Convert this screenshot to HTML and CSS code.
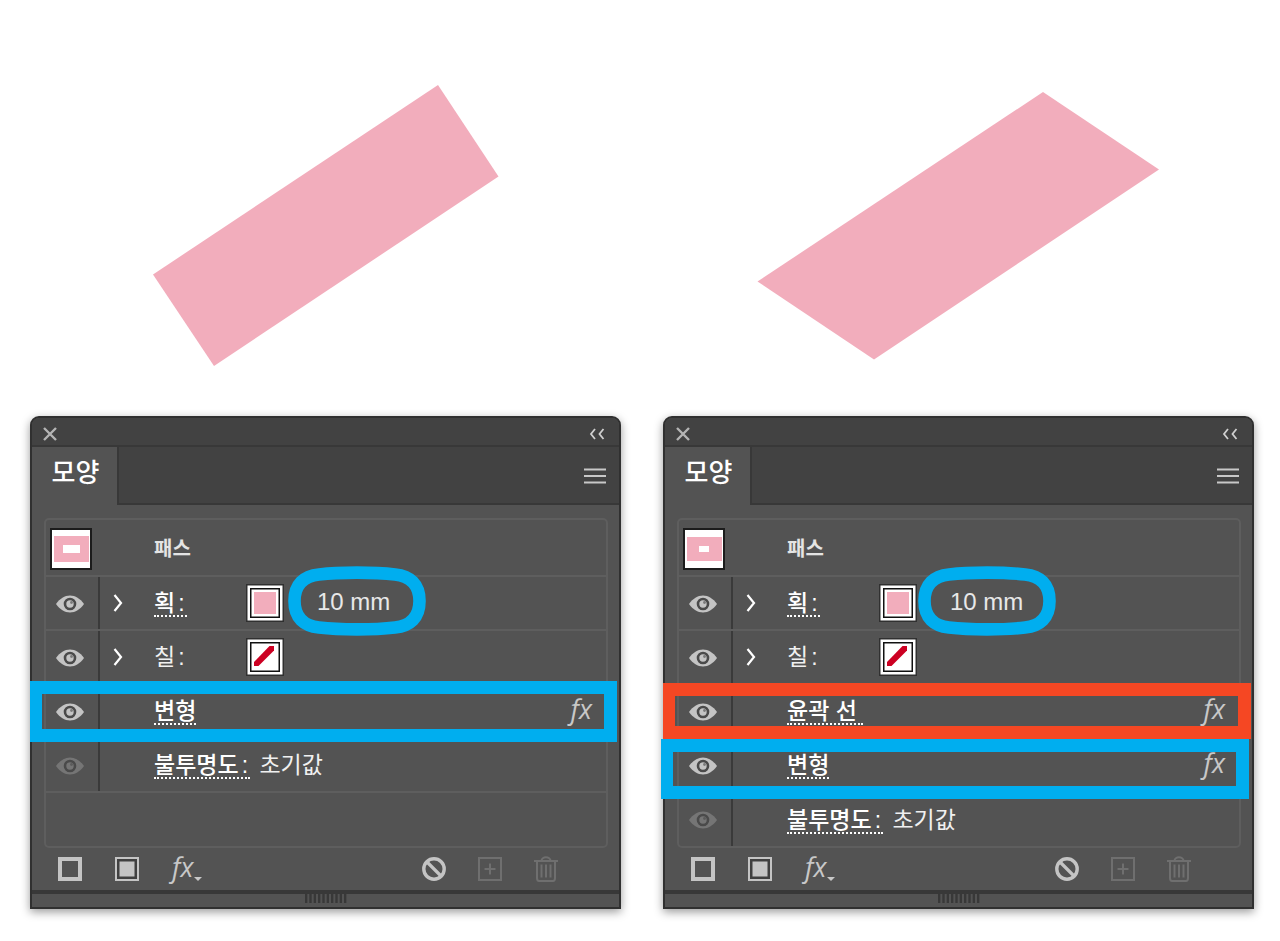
FILE: index.html
```html
<!DOCTYPE html>
<html lang="ko">
<head>
	<meta charset="UTF-8">
	<meta name="viewport" content="width=device-width, initial-scale=1">
	<title>모양 패널</title>
	<link rel="stylesheet" href="styles.css">
</head>
<body>
<!-- icons -->
<svg class="sprite" aria-hidden="true">
	<symbol id="eye" viewBox="0 0 28 18">
		<path d="M0 9C4 3.500 8.500.500 14 .500S24 3.500 28 9C24 14.500 19.500 17.500 14 17.500S4 14.500 0 9z" fill="currentColor"/>
		<circle cx="14" cy="9" r="5" fill="none" stroke="#4a4a4a" stroke-width="2.600"/>
		<circle cx="15.500" cy="7.500" r="1.400" fill="#4a4a4a" opacity=".6"/>
	</symbol>
	<symbol id="arrow" viewBox="0 0 10 18">
		<path d="M1.500 1L8 9l-6.500 8" fill="none" stroke="#fff" stroke-width="2.200"/>
	</symbol>
	<symbol id="close" viewBox="0 0 14 14">
		<path d="M1 1l12 12M13 1L1 13" stroke="#b4b4b4" stroke-width="2.400"/>
	</symbol>
	<symbol id="collapse" viewBox="0 0 16 12">
		<path d="M6 1L2 6l4 5M14.500 1l-4 5 4 5" fill="none" stroke="#d0d0d0" stroke-width="1.800"/>
	</symbol>
	<symbol id="menu" viewBox="0 0 22 16">
		<path d="M0 1.500h22M0 8h22M0 14.500h22" stroke="#c8c8c8" stroke-width="2"/>
	</symbol>
	<symbol id="swatch-pink" viewBox="0 0 38 38">
		<rect width="38" height="38" fill="#303030"/>
		<rect x="1.500" y="1.500" width="35" height="35" fill="#fff"/>
		<rect x="4" y="4" width="30" height="30" fill="#111"/>
		<rect x="5.500" y="5.500" width="27" height="27" fill="#fff"/>
		<rect x="8" y="8" width="22" height="22" fill="#f2adbc"/>
	</symbol>
	<symbol id="swatch-none" viewBox="0 0 38 38">
		<rect width="38" height="38" fill="#303030"/>
		<rect x="1.500" y="1.500" width="35" height="35" fill="#fff"/>
		<rect x="4" y="4" width="30" height="30" fill="#111"/>
		<rect x="5.500" y="5.500" width="27" height="27" fill="#fff"/>
		<path d="M8 24L23.500 8H28v4.500L12.500 28H8z" fill="#cc0022"/>
	</symbol>
	<symbol id="ring" viewBox="0 0 138 70">
		<path d="M6.500 35C6.500 18 16 10 31 8.500C52 6 86 6 107 8.500C122 10 131.500 18 131.500 35S122 60 107 61.500C86 64 52 64 31 61.500C16 60 6.500 52 6.500 35z" fill="none" stroke="#00aeef" stroke-width="12.600"/>
	</symbol>
	<symbol id="stroke" viewBox="0 0 24 24">
		<rect x="2" y="2" width="20" height="20" fill="none" stroke="#c4c4c4" stroke-width="4"/>
	</symbol>
	<symbol id="fill" viewBox="0 0 24 24">
		<rect x="1" y="1" width="22" height="22" fill="#404040" stroke="#c4c4c4" stroke-width="2"/>
		<rect x="4.500" y="4.500" width="15" height="15" fill="#c4c4c4"/>
	</symbol>
	<symbol id="clear" viewBox="0 0 24 24">
		<circle cx="12" cy="12" r="10.200" fill="none" stroke="#c4c4c4" stroke-width="3.400"/>
		<path d="M5 5l14 14" stroke="#c4c4c4" stroke-width="3.200"/>
	</symbol>
	<symbol id="add" viewBox="0 0 24 24">
		<path d="M1 1h22v22H1zM12 6.500v11M6.500 12h11" fill="none" stroke="#6f6f6f" stroke-width="2"/>
	</symbol>
	<symbol id="trash" viewBox="0 0 24 26">
		<path d="M0 5h24M7.500 5c0-5 9-5 9 0M3 5v17q0 3 2 3h14q2 0 2-3V5M7.500 8.500v13M12 8.500v13M16.500 8.500v13" fill="none" stroke="#6f6f6f" stroke-width="2"/>
	</symbol>
	<symbol id="grip" viewBox="0 0 126 27">
		<path d="M0 13.500h126" stroke="#383838" stroke-width="27" stroke-dasharray="7 6"/>
	</symbol>
</svg>

<main class="compare">
	<section class="example">
		<svg class="shape" viewBox="0 0 591 416" role="img" aria-label="회전된 사각형">
			<polygon points="408,85 468.500,176.500 184,366 123,274.500" fill="#f2adbc"/>
		</svg>
		<div class="panel">
			<div class="titlebar">
				<button class="icon" aria-label="닫기"><svg width="14" height="14"><use href="#close"/></svg></button>
				<button class="icon" aria-label="축소"><svg width="16" height="12"><use href="#collapse"/></svg></button>
			</div>
			<div class="tabs">
				<button class="tab">모양</button>
				<button class="icon" aria-label="메뉴"><svg width="22" height="16"><use href="#menu"/></svg></button>
			</div>
			<div class="list">
				<div class="row head">
					<svg class="thumb" width="42" height="42" viewBox="0 0 42 42">
						<rect x="1" y="1" width="40" height="40" fill="#fff" stroke="#1c1c1c" stroke-width="2"/>
						<rect x="4" y="8" width="35" height="26" fill="#f2adbc"/>
						<rect x="13" y="17" width="17" height="8" fill="#fff"/>
					</svg>
					<span class="target">패스</span>
				</div>
				<div class="row">
					<button class="visible" aria-label="표시"><svg width="28" height="18"><use href="#eye"/></svg></button>
					<button class="expand" aria-label="펼치기"><svg width="10" height="18"><use href="#arrow"/></svg></button>
					<span class="name"><a href="#">획<span class="colon">:</span></a></span>
					<button class="icon" aria-label="획 색상"><svg width="38" height="38"><use href="#swatch-pink"/></svg></button>
					<span class="value">10 mm</span>
					<svg class="ring" width="138" height="70"><use href="#ring"/></svg>
				</div>
				<div class="row">
					<button class="visible" aria-label="표시"><svg width="28" height="18"><use href="#eye"/></svg></button>
					<button class="expand" aria-label="펼치기"><svg width="10" height="18"><use href="#arrow"/></svg></button>
					<span class="name">칠<span class="colon">:</span></span>
					<button class="icon" aria-label="칠 색상"><svg width="38" height="38"><use href="#swatch-none"/></svg></button>
				</div>
				<div class="row">
					<button class="visible" aria-label="표시"><svg width="28" height="18"><use href="#eye"/></svg></button>
					<span class="expand"></span>
					<span class="name"><a href="#">변형</a></span>
					<button class="fx">fx</button>
					<div class="mark blue"></div>
				</div>
				<div class="row">
					<button class="visible off" aria-label="표시"><svg width="28" height="18"><use href="#eye"/></svg></button>
					<span class="expand"></span>
					<span class="name"><a href="#">불투명도<span class="colon">:</span></a> <span class="default">초기값</span></span>
				</div>
				<div class="row"></div>
			</div>
			<div class="toolbar">
				<button class="icon" aria-label="새 획 추가"><svg width="24" height="24"><use href="#stroke"/></svg></button>
				<button class="icon" aria-label="새 칠 추가"><svg width="24" height="24"><use href="#fill"/></svg></button>
				<button class="fx more">fx</button>
				<div class="right">
					<button class="icon" aria-label="모양 지우기"><svg width="24" height="24"><use href="#clear"/></svg></button>
					<button class="icon" aria-label="복제" disabled><svg width="24" height="24"><use href="#add"/></svg></button>
					<button class="icon" aria-label="삭제" disabled><svg width="24" height="26"><use href="#trash"/></svg></button>
				</div>
			</div>
			<div class="resize"><svg width="42" height="9"><use href="#grip"/></svg></div>
		</div>
	</section>

	<section class="example">
		<svg class="shape" viewBox="0 0 591 416" role="img" aria-label="기울어진 평행사변형">
			<polygon points="380,92 496,169.500 211,359.500 94.500,281.500" fill="#f2adbc"/>
		</svg>
		<div class="panel">
			<div class="titlebar">
				<button class="icon" aria-label="닫기"><svg width="14" height="14"><use href="#close"/></svg></button>
				<button class="icon" aria-label="축소"><svg width="16" height="12"><use href="#collapse"/></svg></button>
			</div>
			<div class="tabs">
				<button class="tab">모양</button>
				<button class="icon" aria-label="메뉴"><svg width="22" height="16"><use href="#menu"/></svg></button>
			</div>
			<div class="list">
				<div class="row head">
					<svg class="thumb" width="42" height="42" viewBox="0 0 42 42">
						<rect x="1" y="1" width="40" height="40" fill="#fff" stroke="#1c1c1c" stroke-width="2"/>
						<rect x="4" y="9" width="35" height="24" fill="#f2adbc"/>
						<rect x="16" y="18" width="10" height="6" fill="#fff"/>
					</svg>
					<span class="target">패스</span>
				</div>
				<div class="row">
					<button class="visible" aria-label="표시"><svg width="28" height="18"><use href="#eye"/></svg></button>
					<button class="expand" aria-label="펼치기"><svg width="10" height="18"><use href="#arrow"/></svg></button>
					<span class="name"><a href="#">획<span class="colon">:</span></a></span>
					<button class="icon" aria-label="획 색상"><svg width="38" height="38"><use href="#swatch-pink"/></svg></button>
					<span class="value">10 mm</span>
					<svg class="ring" width="138" height="70"><use href="#ring"/></svg>
				</div>
				<div class="row">
					<button class="visible" aria-label="표시"><svg width="28" height="18"><use href="#eye"/></svg></button>
					<button class="expand" aria-label="펼치기"><svg width="10" height="18"><use href="#arrow"/></svg></button>
					<span class="name">칠<span class="colon">:</span></span>
					<button class="icon" aria-label="칠 색상"><svg width="38" height="38"><use href="#swatch-none"/></svg></button>
				</div>
				<div class="row">
					<button class="visible" aria-label="표시"><svg width="28" height="18"><use href="#eye"/></svg></button>
					<span class="expand"></span>
					<span class="name"><a href="#" class="wide">윤곽 선</a></span>
					<button class="fx">fx</button>
					<div class="mark red"></div>
				</div>
				<div class="row">
					<button class="visible" aria-label="표시"><svg width="28" height="18"><use href="#eye"/></svg></button>
					<span class="expand"></span>
					<span class="name"><a href="#">변형</a></span>
					<button class="fx">fx</button>
					<div class="mark blue below"></div>
				</div>
				<div class="row">
					<button class="visible off" aria-label="표시"><svg width="28" height="18"><use href="#eye"/></svg></button>
					<span class="expand"></span>
					<span class="name"><a href="#">불투명도<span class="colon">:</span></a> <span class="default">초기값</span></span>
				</div>
			</div>
			<div class="toolbar">
				<button class="icon" aria-label="새 획 추가"><svg width="24" height="24"><use href="#stroke"/></svg></button>
				<button class="icon" aria-label="새 칠 추가"><svg width="24" height="24"><use href="#fill"/></svg></button>
				<button class="fx more">fx</button>
				<div class="right">
					<button class="icon" aria-label="모양 지우기"><svg width="24" height="24"><use href="#clear"/></svg></button>
					<button class="icon" aria-label="복제" disabled><svg width="24" height="24"><use href="#add"/></svg></button>
					<button class="icon" aria-label="삭제" disabled><svg width="24" height="26"><use href="#trash"/></svg></button>
				</div>
			</div>
			<div class="resize"><svg width="42" height="9"><use href="#grip"/></svg></div>
		</div>
	</section>
</main>
</body>
</html>
```
FILE: styles.css
```css
*{
	box-sizing: border-box;
}
body{
	margin: 0;
	background: #fff;
	color: #f0f0f0;
	font-family: "Liberation Sans", "Noto Sans CJK KR", sans-serif;
	font-size: 23px;
	line-height: 30px;
}
svg{
	display: block;
}
.sprite{
	position: absolute;
	width: 0;
	height: 0;
}
button{
	margin: 0;
	padding: 0;
	border: 0;
	background: none;
	color: inherit;
	font: inherit;
	cursor: pointer;
}
.compare{
	display: grid;
	grid-template-columns: 1fr 1fr;
	gap: 42px;
	padding: 0 26px 32px 30px;
}
.shape{
	width: 100%;
}

/* panel */
.panel{
	border: 2px solid #303030;
	border-radius: 9px 9px 0 0;
	background: #535353;
	box-shadow: 0 3px 10px rgba(0,0,0,.4);
}
.titlebar{
	display: flex;
	align-items: center;
	justify-content: space-between;
	height: 29px;
	padding: 4px 14px 0 11px;
	border-bottom: 2px solid #383838;
	border-radius: 7px 7px 0 0;
	background: #424242;
}
.tabs{
	display: flex;
	justify-content: space-between;
	height: 58px;
	padding-right: 13px;
	background: linear-gradient(#383838, #383838) bottom / 100% 2px no-repeat #424242;
}
.tab{
	width: 87px;
	padding: 0 0 6px 2px;
	border-right: 2px solid #383838;
	background: #535353;
	color: #fff;
	font-size: 26px;
	font-weight: 500;
}
.list{
	margin: 13px 11px 0 12px;
	border: 2px solid #5e5e5e;
	border-radius: 5px;
}
.row{
	position: relative;
	display: flex;
	align-items: center;
	height: 54px;
	border-bottom: 2px solid #5e5e5e;
}
.row:last-child{
	height: 53px;
	border-bottom: 0;
}
.head{
	height: 57px;
	padding: 2px 0 0 4px;
}
.target{
	margin-left: 62px;
	color: #e4e4e4;
	font-size: 20px;
	font-weight: bold;
}
.visible{
	display: flex;
	align-items: center;
	justify-content: center;
	align-self: stretch;
	width: 54px;
	padding: 1px 4px 0 0;
	border-right: 2px solid #3a3a3a;
	color: #c4c4c4;
}
.off{
	color: #757575;
}
.expand{
	width: 54px;
	padding-left: 13px;
}
.name{
	min-width: 92px;
	white-space: nowrap;
}
.name a{
	display: inline-block;
	height: 28px;
	border-bottom: 2px dotted #fff;
	color: #fff;
	font-weight: 500;
	line-height: 28px;
	text-decoration: none;
}
.name .wide{
	padding-right: 6px;
}
.colon{
	padding: 0 2px 0 3px;
}
.default{
	margin-left: 3px;
}
.value{
	margin-left: 33px;
	color: #e8e8e8;
	font-size: 24px;
	line-height: 28px;
	padding-bottom: 2px;
}
.fx{
	color: #c8c8c8;
	font-family: "Open Sans", "Noto Sans", sans-serif;
	font-size: 27px;
	font-style: italic;
	font-weight: 400;
	line-height: 28px;
}
.row .fx{
	margin-left: auto;
	padding: 0 14px 4px 0;
}

/* highlights */
.ring{
	position: absolute;
	top: -11px;
	left: 242px;
}
.example + .example .ring{
	left: 239px;
}
.mark{
	position: absolute;
	z-index: 1;
	top: -4px;
	right: -11px;
	bottom: -5px;
	left: -16px;
	border: 13px solid;
	border-left-width: 12px;
	pointer-events: none;
}
.mark.blue{
	border-color: #00aeef;
}
.mark.red{
	top: -2px;
	right: -12px;
	bottom: -2px;
	border-color: #f54723;
}
.mark.below{
	top: 0;
	right: -10px;
	bottom: -8px;
	left: -18px;
}

.toolbar{
	display: flex;
	align-items: center;
	gap: 33px;
	height: 42px;
	padding: 0 61px 0 26px;
}
.more{
	display: flex;
	align-items: flex-end;
	padding-bottom: 4px;
}
.more::after{
	content: "";
	margin-left: 1px;
	border: 4px solid transparent;
	border-top-color: #c8c8c8;
	border-bottom: 0;
}
.right{
	display: flex;
	align-items: center;
	gap: 32px;
	margin-left: auto;
}
.resize{
	display: flex;
	justify-content: center;
	height: 17px;
	border-top: 4px solid #383838;
}
```
